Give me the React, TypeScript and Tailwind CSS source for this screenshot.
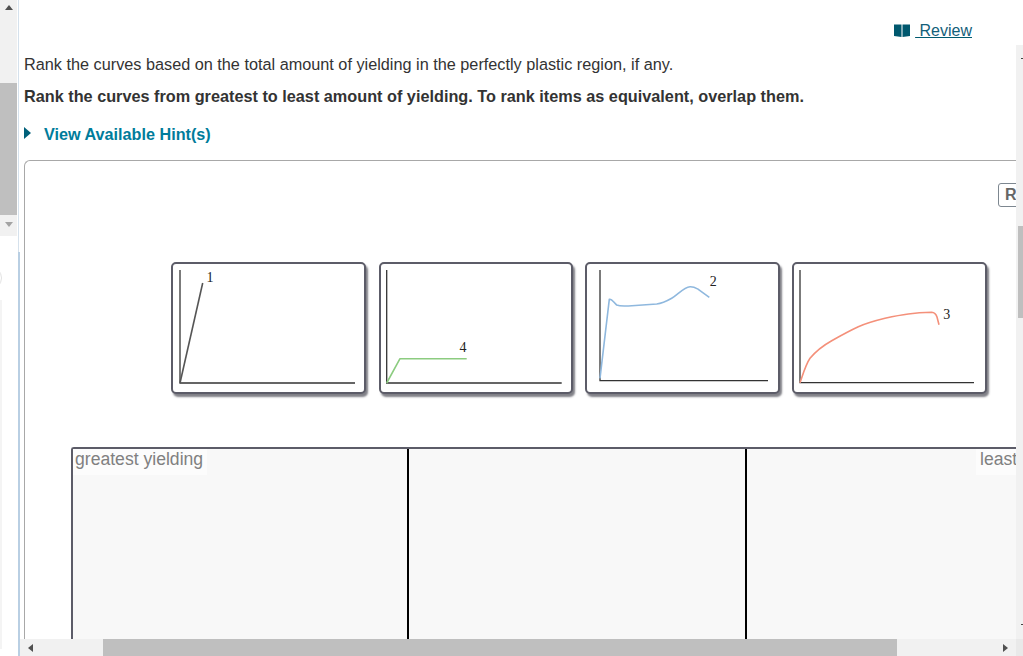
const sans = "font-['Liberation_Sans',Arial,sans-serif]";

function Chart({ line, color, label, lx, ly, x0, yTop, yBottom, xEnd, cls = "w-[195px]" }: { line: string; color: string; label: string; lx: number; ly: number; x0: number; yTop: number; yBottom: number; xEnd: number; cls?: string }) {
  return (
    <div className={`${cls} h-[132px] shrink-0 overflow-hidden border-2 border-[#5c5c68] rounded-[5px] bg-white shadow-[2px_3px_2px_rgba(60,60,70,0.65)]`}>
      <svg viewBox="0 0 191 128" className="block w-[191px] h-[128px]" fill="none">
        <path d={`M${x0} ${yTop}V${yBottom}H${xEnd}`} stroke="#333" strokeWidth="1.3" />
        <path d={line} stroke={color} strokeWidth="1.6" strokeLinejoin="round" />
        <text x={lx} y={ly} textAnchor="middle" fontSize="14" fill="#222" fontFamily="'Liberation Serif',serif">{label}</text>
      </svg>
    </div>
  );
}

export default function App() {
  return (
    <div className={`${sans} w-[1023px] h-[656px] overflow-hidden flex bg-white text-[#333]`}>
      {/* outer scrollbar column */}
      <div className="w-[18px] shrink-0 flex flex-col">
        <div className="w-[17px] h-[236px] bg-[#f1f1f1] flex flex-col">
          <div className="h-[14px] flex items-center justify-center pt-[1px]">
            <div className="w-0 h-0 border-l-[4px] border-r-[4px] border-b-[5px] border-l-transparent border-r-transparent border-b-[#505050]" />
          </div>
          <div className="mt-[69px] h-[132px] bg-[#bfbfbf]" />
          <div className="flex-1 flex items-center justify-center pb-[3px]">
            <div className="w-0 h-0 border-l-[4px] border-r-[4px] border-t-[5px] border-l-transparent border-r-transparent border-t-[#a3a3a3]" />
          </div>
        </div>
        <div className="mt-[30px] w-[2px] h-[24px] overflow-hidden">
          <div className="w-[24px] h-[24px] -ml-[22px] rounded-full border border-[#e2e2e2]" />
        </div>
        <div className="mt-[10px] w-[2px] h-[349px] bg-[#f4f4f4]" />
      </div>
      <div className="w-[2px] shrink-0 flex flex-col">
        <div className="h-[252px] border-l border-[#d5e1ec]" />
        <div className="flex-1 bg-[#b9cfe3]" />
      </div>

      {/* page */}
      <div className="flex-1 min-w-0 flex flex-col">
        <div className="flex-1 min-h-0 flex">
          <div className="w-[996px] shrink-0 overflow-hidden pl-[4px]">
            <div className="h-[45px] flex justify-end items-start pt-[22px] pr-[44px]">
              <a className="flex items-center text-[16px] leading-[18px] text-[#14607a]">
                <svg viewBox="0 0 16 13" className="w-[16px] h-[13px] mr-[5px] -mt-[2px]" fill="#00586e">
                  <path d="M0 .6H7.5V13L0 12Z" />
                  <path d="M8.5 .6H16V12L8.5 13Z" />
                </svg>
                <span className="underline decoration-[#005a70] whitespace-pre">{"\u00a0Review"}</span>
              </a>
            </div>
            <p className="text-[16.25px] leading-[20px] mt-[9px] whitespace-nowrap">Rank the curves based on the total amount of yielding in the perfectly plastic region, if any.</p>
            <p className="text-[16.25px] leading-[20px] font-bold mt-[12px] whitespace-nowrap">Rank the curves from greatest to least amount of yielding. To rank items as equivalent, overlap them.</p>
            <div className="flex items-center mt-[18px] h-[20px]">
              <div className="w-0 h-0 border-t-[6px] border-b-[6px] border-l-[7px] border-t-transparent border-b-transparent border-l-[#00607a] -mt-[2px]" />
              <span className="ml-[13px] text-[16.2px] leading-[20px] font-bold text-[#007c9b]">View Available Hint(s)</span>
            </div>

            <div className="mt-[16px] border-t border-l border-[#a8a8a8] rounded-tl-[6px] h-[600px] w-[1000px]">
              <div className="h-[22px]" />
              <div className="flex justify-end pr-[2px]">
                <div className="w-[24px] h-[24px] border border-[#7d8790] rounded-[3px] text-[16px] leading-[22px] font-bold text-[#666] pl-[6px]">R</div>
              </div>
              <div className="flex gap-[12px] ml-[146px] mt-[55px]">
                <Chart x0={7} yTop={6} yBottom={119} xEnd={182} color="#555" line="M7 119 29.7 19" label="1" lx={37} ly={18} />
                <Chart cls="w-[194px] ml-[1px]" x0={5.7} yTop={6} yBottom={119} xEnd={180.7} color="#8ccc80" line="M5.7 119 19 94.7H85.7" label="4" lx={82} ly={88} />
                <Chart x0={13} yTop={6} yBottom={116.7} xEnd={181} color="#8fb8de" line="M13 114.3 22.3 35.3C25 34.5 27 39 29.7 41C33 42.5 37 42 41.3 42L69.7 40C75 39.5 80 37 84.7 34.3C91 30.5 97 23 103 22.7C107 22.5 109 24 111.3 25.3L122.3 33.3" label="2" lx={126.3} ly={22} />
                <Chart x0={6} yTop={6} yBottom={118.7} xEnd={180} color="#f4907a" line="M6 118.7C9 110 12 100 16 94.3C22 87 30 81 37.7 76.7C46 72 55 67 64.3 62.7C73 59 82 56.5 91 54.3C99 52.5 106 51 114.3 50C122 49 130 48.5 137.7 48.3C141 48.5 142 50 143 53L145 60.7" label="3" lx={152.7} ly={55.3} />
              </div>
              <div className="ml-[46px] mt-[53px] w-[1000px] h-[300px] border-t-2 border-l-2 border-[#5c5c68] rounded-tl-[3px] bg-[#f8f8f8] flex text-[17.6px] leading-[20px] text-[#808080]">
                <div className="w-[336px] shrink-0 h-full border-r-2 border-black">
                  <div className="w-fit h-[26px] bg-[#fcfcfc] pl-[2px] pr-[4px] whitespace-nowrap">greatest yielding</div>
                </div>
                <div className="w-[338px] shrink-0 h-full border-r-2 border-black" />
                <div className="ml-[229px] h-[26px] bg-[#fcfcfc] pl-[4px] pr-[4px] whitespace-nowrap">least</div>
              </div>
            </div>
          </div>
          {/* inner vertical scrollbar */}
          <div className="flex-1 mt-[45px] bg-[#f1f1f1] flex flex-col items-end">
            <div className="w-[2px] h-[1px] mt-[13px] bg-[#444]" />
            <div className="w-[5px] h-[92px] mt-[167px] bg-[#bfbfbf]" />
            <div className="w-[2px] h-[1px] mt-[306px] bg-[#444]" />
          </div>
        </div>
        {/* inner horizontal scrollbar */}
        <div className="h-[17px] shrink-0 bg-[#f1f1f1] flex items-center">
          <div className="w-[83px] flex justify-start pl-[8px]">
            <div className="w-0 h-0 border-t-[4px] border-b-[4px] border-r-[5px] border-t-transparent border-b-transparent border-r-[#505050]" />
          </div>
          <div className="w-[794px] h-full bg-[#bfbfbf]" />
          <div className="flex-1 flex justify-end pr-[8px]">
            <div className="w-0 h-0 border-t-[4px] border-b-[4px] border-l-[5px] border-t-transparent border-b-transparent border-l-[#505050]" />
          </div>
          <div className="w-[7px] h-full bg-[#e9e9e9]" />
        </div>
      </div>
    </div>
  );
}
